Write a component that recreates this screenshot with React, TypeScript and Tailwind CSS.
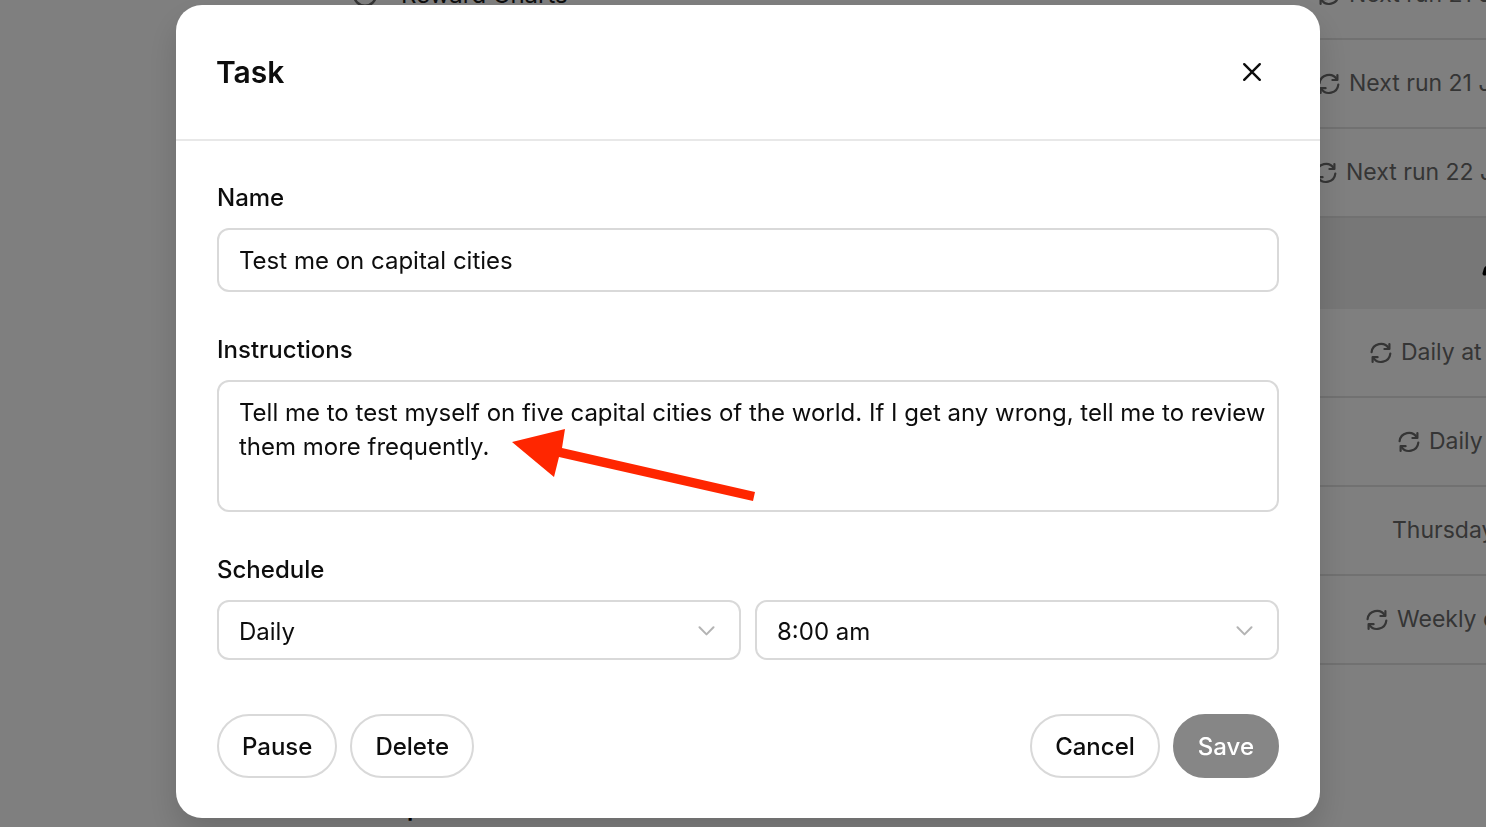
import { useState } from 'react'
import { Circle, Pencil } from 'lucide-react'

type Row = {
  id: number
  title?: string
  when: string
  repeats: boolean
  indent: string
}

const ACTIVE: Row[] = [
  { id: 1, title: 'Reward Charts', when: 'Next run 21 J', repeats: true, indent: 'pl-[1142px]' },
  { id: 2, when: 'Next run 21 J', repeats: true, indent: 'pl-[1142px]' },
  { id: 3, when: 'Next run 22 J', repeats: true, indent: 'pl-[1139px]' },
]

const PAUSED: Row[] = [
  { id: 4, when: 'Daily at', repeats: true, indent: 'pl-[1194px]' },
  { id: 5, when: 'Daily', repeats: true, indent: 'pl-[1222px]' },
  { id: 6, when: 'Thursday', repeats: false, indent: 'pl-[1216px]' },
  { id: 7, when: 'Weekly o', repeats: true, indent: 'pl-[1190px]' },
]

const FIELD =
  'block w-full rounded-xl border-2 border-[#d9d9d9] bg-white pl-5 pr-2 text-[#0d0d0d] focus:outline-none focus:border-gray-400'
const LABEL = 'block mb-[13px] font-medium leading-[34px]'
const PILL = 'h-16 rounded-full border-2 px-[23px] pt-px font-medium'

function RepeatIcon() {
  return (
    <svg
      className="h-[22px] w-[22px] shrink-0"
      viewBox="0 0 22 22"
      fill="none"
      stroke="currentColor"
      strokeWidth="2.2"
      strokeLinecap="round"
      strokeLinejoin="round"
    >
      <path d="M1.6 10.2A9.3 9.3 0 0 1 18.8 6.4" />
      <path d="M19.4 2V7H14.4" />
      <path d="M20.3 11.6A9.3 9.3 0 0 1 3.2 15.6" />
      <path d="M2.6 20V15.2H7.6" />
    </svg>
  )
}

function ChevronIcon() {
  return (
    <svg
      className="pointer-events-none absolute right-[26px] top-[26px] h-[10px] w-[17px]"
      viewBox="0 0 17 10"
      fill="none"
      stroke="#b4b4b4"
      strokeWidth="2"
      strokeLinecap="round"
      strokeLinejoin="round"
    >
      <path d="M1.5 1.2L8.5 8.4L15.5 1.2" />
    </svg>
  )
}

function TaskRow({ row }: { row: Row }) {
  return (
    <li className="grid h-[89px] items-center whitespace-nowrap border-b-2 border-[#e3e3e3] text-[#6b6b6b]">
      {row.title && (
        <div className="col-start-1 row-start-1 flex items-center gap-[23px] pl-[176px]">
          <Circle size={26} strokeWidth={2.4} />
          <span className="text-[#1c1c1c]">{row.title}</span>
        </div>
      )}
      <div className={`col-start-1 row-start-1 flex items-center gap-[9px] text-[23px] ${row.indent}`}>
        {row.repeats && <RepeatIcon />}
        <span>{row.when}</span>
      </div>
    </li>
  )
}

function TaskList() {
  return (
    <div className="-mt-[49px] ml-44">
      <ul>
        {ACTIVE.map((row) => (
          <TaskRow key={row.id} row={row} />
        ))}
      </ul>
      <div className="flex h-[91px] items-center bg-[#eeeeee] pl-[1306px] text-black">
        <Pencil size={24} strokeWidth={3} className="shrink-0" />
      </div>
      <ul>
        {PAUSED.map((row) => (
          <TaskRow key={row.id} row={row} />
        ))}
      </ul>
      <p className="pl-[231px] pt-[127px] font-semibold text-black">p</p>
    </div>
  )
}

function Arrow() {
  return (
    <svg
      className="pointer-events-none absolute left-[295px] top-[48px] h-[74px] w-[244px]"
      viewBox="0 0 244 74"
      fill="#ff2600"
    >
      <path d="M0 14L53 1L50 20L243 64L241 73L47 29L42 49Z" />
    </svg>
  )
}

export default function App() {
  const [name, setName] = useState('Test me on capital cities')
  const [instructions, setInstructions] = useState(
    'Tell me to test myself on five capital cities of the world. If I get any wrong, tell me to review them more frequently.'
  )
  const [repeat, setRepeat] = useState('Daily')
  const [time, setTime] = useState('8:00 am')

  return (
    <div className="h-screen overflow-hidden bg-white font-['Inter',sans-serif] text-2xl">
      <TaskList />

      <div className="fixed inset-0 overflow-hidden bg-black/50 pl-44 pr-[166px] pt-[5px]">
        <div
          role="dialog"
          aria-labelledby="task-title"
          className="w-full rounded-[26px] bg-white text-[#0d0d0d] shadow-[0_16px_32px_rgba(0,0,0,0.15)]"
        >
          <header className="flex h-[136px] items-center justify-between border-b-2 border-[#e8e8e8] pl-10 pr-[54px]">
            <h1 id="task-title" className="text-3xl font-semibold">
              Task
            </h1>
            <button type="button" aria-label="Close" className="flex h-7 w-7 items-center justify-center">
              <svg
                className="h-5 w-5"
                viewBox="0 0 20 20"
                stroke="currentColor"
                strokeWidth="2.4"
                strokeLinecap="round"
              >
                <path d="M2.2 2.2L17.8 17.8M17.8 2.2L2.2 17.8" />
              </svg>
            </button>
          </header>

          <form className="px-[41px] pb-10 pt-10" onSubmit={(e) => e.preventDefault()}>
            <div className="space-y-[41px]">
              <div>
                <label htmlFor="name" className={LABEL}>
                  Name
                </label>
                <input
                  id="name"
                  value={name}
                  onChange={(e) => setName(e.target.value)}
                  className={`${FIELD} h-16`}
                />
              </div>

              <div>
                <label htmlFor="instructions" className={LABEL}>
                  Instructions
                </label>
                <div className="relative">
                  <textarea
                    id="instructions"
                    value={instructions}
                    onChange={(e) => setInstructions(e.target.value)}
                    spellCheck={false}
                    className={`${FIELD} h-[132px] resize-none py-[14px] leading-[34px]`}
                  />
                  <Arrow />
                </div>
              </div>

              <div>
                <label htmlFor="repeat" className={LABEL}>
                  Schedule
                </label>
                <div className="grid grid-cols-2 gap-[14px]">
                  <div className="relative">
                    <select
                      id="repeat"
                      value={repeat}
                      onChange={(e) => setRepeat(e.target.value)}
                      className={`${FIELD} h-[60px] appearance-none pt-[3px]`}
                    >
                      <option>Daily</option>
                    </select>
                    <ChevronIcon />
                  </div>
                  <div className="relative">
                    <select
                      aria-label="Time"
                      value={time}
                      onChange={(e) => setTime(e.target.value)}
                      className={`${FIELD} h-[60px] appearance-none pt-[3px]`}
                    >
                      <option>8:00 am</option>
                    </select>
                    <ChevronIcon />
                  </div>
                </div>
              </div>
            </div>

            <div className="mt-[54px] flex justify-between">
              <div className="flex gap-[13px]">
                <button type="button" className={`${PILL} border-[#d9d9d9]`}>
                  Pause
                </button>
                <button type="button" className={`${PILL} border-[#d9d9d9]`}>
                  Delete
                </button>
              </div>
              <div className="flex gap-[13px]">
                <button type="button" className={`${PILL} border-[#d9d9d9]`}>
                  Cancel
                </button>
                <button type="submit" className={`${PILL} border-[#868686] bg-[#868686] text-white`}>
                  Save
                </button>
              </div>
            </div>
          </form>
        </div>
      </div>
    </div>
  )
}
